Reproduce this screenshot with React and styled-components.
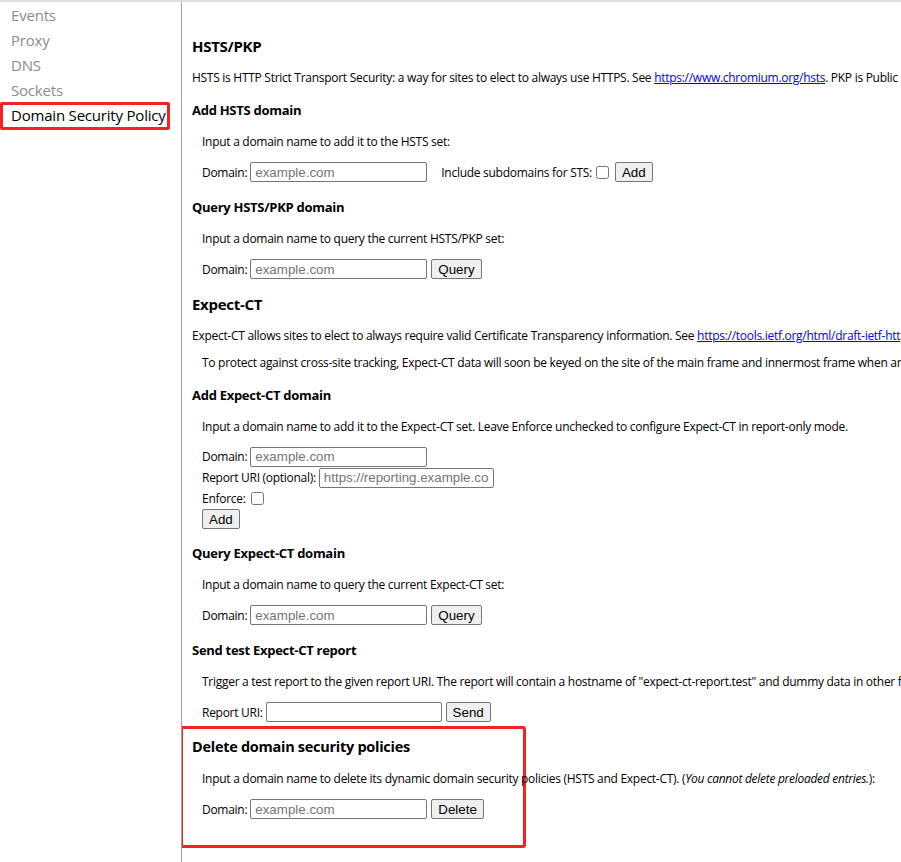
import styled, { createGlobalStyle } from 'styled-components';

const GlobalStyle = createGlobalStyle`
  html, body {
    margin: 0;
    padding: 0;
    background: #fff;
    overflow: hidden;
  }
  body {
    font-family: 'Open Sans', 'Noto Sans', sans-serif;
    font-size: 12px;
    color: #000;
  }
`;

const Page = styled.div`
  display: flex;
  height: 862px;
  border-top: 2px solid #dedede;
  box-sizing: border-box;
`;

const Sidebar = styled.nav`
  flex: 0 0 181px;
  border-right: 1px solid #a0a0a0;
`;

const NavItem = styled.div`
  position: relative;
  height: 25px;
  line-height: 26px;
  padding-left: 11px;
  font-size: 15px;
  letter-spacing: -0.2px;
  white-space: nowrap;
  color: ${(p) => (p.active ? '#000' : '#8c8c8c')};

  ${(p) =>
    p.active &&
    `
    &::after {
      content: '';
      position: absolute;
      left: 0;
      top: 0;
      width: 170px;
      height: 28px;
      border: 3px solid #f5231f;
      border-radius: 2px;
      box-sizing: border-box;
    }
  `}
`;

const Main = styled.main`
  flex: 1;
  min-width: 0;
  overflow: hidden;
  padding: 20px 0 0 10px;
  white-space: nowrap;
  letter-spacing: -0.28px;
`;

const Heading2 = styled.h2`
  font-size: 15px;
  font-weight: 700;
  line-height: 20px;
  margin: 14px 0;
`;

const Heading3 = styled.h3`
  font-size: ${(p) => (p.large ? '14.5px' : '13px')};
  font-weight: 700;
  line-height: ${(p) => (p.large ? '18px' : '16px')};
  margin: 16px 0;
`;

const Text = styled.p`
  line-height: 16px;
  margin: 11px 0;
  padding-left: ${(p) => (p.indent ? '10px' : '0')};
`;

const Link = styled.a`
  color: #0000ee;
  text-decoration: underline;
`;

const Form = styled.div`
  margin: 11px 0;
  padding-left: 10px;
  display: flex;
  flex-direction: column;
`;

const Row = styled.div`
  display: flex;
  align-items: center;
  height: ${(p) => p.h || 22}px;
`;

const Label = styled.span`
  margin-right: 3px;
  margin-left: ${(p) => p.ml || 0}px;
`;

const Input = styled.input`
  box-sizing: border-box;
  width: ${(p) => p.w || 177}px;
  height: 20px;
  padding: 1px 4px;
  border: 1px solid #767676;
  border-radius: 2px;
  font-family: 'Liberation Sans', Arial, sans-serif;
  font-size: 13.33px;
  color: #000;
  outline: none;
  &::placeholder {
    color: #757575;
  }
`;

const Button = styled.button`
  box-sizing: border-box;
  height: 20px;
  margin-left: ${(p) => p.ml ?? 4}px;
  padding: 0 6px;
  border: 1px solid #767676;
  border-radius: 2px;
  background: #efefef;
  font-family: 'Liberation Sans', Arial, sans-serif;
  font-size: 13.33px;
  color: #000;
`;

const Check = styled.input.attrs({ type: 'checkbox' })`
  width: 13px;
  height: 13px;
  margin: 0 3px 0 ${(p) => p.ml || 4}px;
`;

const DeleteBox = styled.section`
  width: 346px;
  margin: -8px 0 0 -12px;
  padding: 9px 0 14px 9px;
  border: 3px solid #f5231f;
  border-radius: 3px;
  box-sizing: border-box;

  h3 {
    margin-top: 0;
    margin-bottom: 15px;
  }
`;

const navItems = ['Events', 'Proxy', 'DNS', 'Sockets', 'Domain Security Policy'];

export default function App() {
  return (
    <>
      <GlobalStyle />
      <Page>
        <Sidebar>
          {navItems.map((item) => (
            <NavItem key={item} active={item === 'Domain Security Policy'}>
              {item}
            </NavItem>
          ))}
        </Sidebar>
        <Main>
          <Heading2>HSTS/PKP</Heading2>
          <Text>
            HSTS is HTTP Strict Transport Security: a way for sites to elect to always use HTTPS. See{' '}
            <Link href="#">https://www.chromium.org/hsts</Link>. PKP is Public Key Pinning: Chrome "pins"
            certain public keys for certain sites in official builds.
          </Text>

          <Heading3>Add HSTS domain</Heading3>
          <Text indent>Input a domain name to add it to the HSTS set:</Text>
          <Form>
            <Row>
              <Label>Domain:</Label>
              <Input placeholder="example.com" />
              <Label ml={14}>Include subdomains for STS:</Label>
              <Check ml={1} />
              <Button ml={3}>Add</Button>
            </Row>
          </Form>

          <Heading3>Query HSTS/PKP domain</Heading3>
          <Text indent>Input a domain name to query the current HSTS/PKP set:</Text>
          <Form>
            <Row>
              <Label>Domain:</Label>
              <Input placeholder="example.com" />
              <Button>Query</Button>
            </Row>
          </Form>

          <Heading2>Expect-CT</Heading2>
          <Text>
            Expect-CT allows sites to elect to always require valid Certificate Transparency information. See{' '}
            <Link href="#">https://tools.ietf.org/html/draft-ietf-httpbis-expect-ct</Link>.
          </Text>
          <Text indent>
            To protect against cross-site tracking, Expect-CT data will soon be keyed on the site of the main
            frame and innermost frame when any type of partitioning is enabled.
          </Text>

          <Heading3>Add Expect-CT domain</Heading3>
          <Text indent>
            Input a domain name to add it to the Expect-CT set. Leave Enforce unchecked to configure Expect-CT in
            report-only mode.
          </Text>
          <Form>
            <Row h={21}>
              <Label>Domain:</Label>
              <Input placeholder="example.com" />
            </Row>
            <Row h={21}>
              <Label>Report URI (optional):</Label>
              <Input w={175} placeholder="https://reporting.example.com" />
            </Row>
            <Row h={21}>
              <Label>Enforce:</Label>
              <Check ml={2} />
            </Row>
            <Row h={20}>
              <Button ml={0}>Add</Button>
            </Row>
          </Form>

          <Heading3>Query Expect-CT domain</Heading3>
          <Text indent>Input a domain name to query the current Expect-CT set:</Text>
          <Form>
            <Row>
              <Label>Domain:</Label>
              <Input placeholder="example.com" />
              <Button>Query</Button>
            </Row>
          </Form>

          <Heading3>Send test Expect-CT report</Heading3>
          <Text indent>
            Trigger a test report to the given report URI. The report will contain a hostname of
            "expect-ct-report.test" and dummy data in other fields.
          </Text>
          <Form>
            <Row>
              <Label>Report URI:</Label>
              <Input w={176} />
              <Button>Send</Button>
            </Row>
          </Form>

          <DeleteBox>
            <Heading3 large>Delete domain security policies</Heading3>
            <Text indent>
              Input a domain name to delete its dynamic domain security policies (HSTS and Expect-CT). (
              <em>You cannot delete preloaded entries.</em>):
            </Text>
            <Form>
              <Row>
                <Label>Domain:</Label>
                <Input placeholder="example.com" />
                <Button>Delete</Button>
              </Row>
            </Form>
          </DeleteBox>
        </Main>
      </Page>
    </>
  );
}
